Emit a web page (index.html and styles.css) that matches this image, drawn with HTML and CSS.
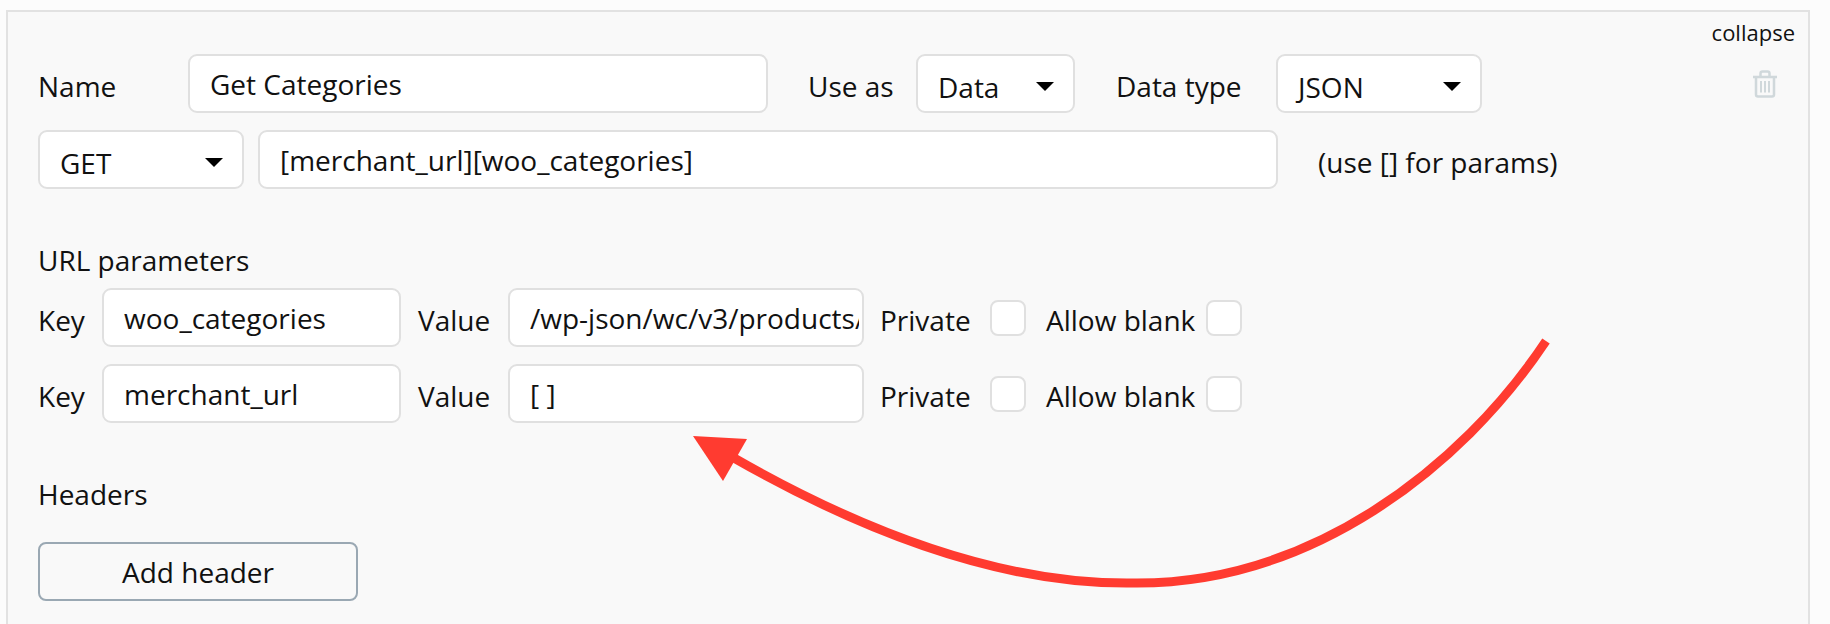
FILE: index.html
```html
<!DOCTYPE html>
<html lang="en">
<head>
    <meta charset="UTF-8">
    <title>API call</title>
    <link rel="stylesheet" href="styles.css">
</head>
<body>
    <div class="panel">
        <div class="collapse">collapse</div>

        <div class="row">
            <span class="lbl lbl-name">Name</span>
            <div class="field f-name">Get Categories</div>
            <span class="lbl lbl-use">Use as</span>
            <div class="field sel f-use">Data<i class="caret"></i></div>
            <span class="lbl lbl-type">Data type</span>
            <div class="field sel f-type">JSON<i class="caret"></i></div>
            <svg class="trash" width="26" height="28" viewBox="0 0 26 28" fill="none" stroke="#d0d8db" stroke-width="2.500">
                <path d="M1 7h24M8.500 7V3.500q0-2 2-2h5q2 0 2 2V7"/>
                <path d="M4 7v17.500q0 2 2 2h14q2 0 2-2V7"/>
                <path d="M9 11v11.500M13 11v11.500M17 11v11.500" stroke-width="2"/>
            </svg>
        </div>

        <div class="row">
            <div class="field sel f-method">GET<i class="caret"></i></div>
            <div class="field f-url">[merchant_url][woo_categories]</div>
            <span class="lbl lbl-hint">(use [] for params)</span>
        </div>

        <div class="section section-url">URL parameters</div>

        <div class="row">
            <span class="lbl lbl-key">Key</span>
            <div class="field f-key">woo_categories</div>
            <span class="lbl lbl-value">Value</span>
            <div class="field f-value"><span class="clip">/wp-json/wc/v3/products/categories</span></div>
            <span class="lbl lbl-private">Private</span>
            <div class="check"></div>
            <span class="lbl lbl-blank">Allow blank</span>
            <div class="check"></div>
        </div>

        <div class="row">
            <span class="lbl lbl-key">Key</span>
            <div class="field f-key">merchant_url</div>
            <span class="lbl lbl-value">Value</span>
            <div class="field f-value"><span class="clip">[ ]</span></div>
            <span class="lbl lbl-private">Private</span>
            <div class="check"></div>
            <span class="lbl lbl-blank">Allow blank</span>
            <div class="check"></div>
        </div>

        <div class="section section-headers">Headers</div>

        <button class="add-btn">Add header</button>
    </div>

    <!-- annotation on top of the screenshot -->
    <svg class="arrow" width="1830" height="624" viewBox="0 0 1830 624" fill="none">
        <path d="M1546 341C1460 470 1310 583 1137 583C1000 586 860 530 734 458" stroke="#ff3b30" stroke-width="9"/>
        <polygon points="693,436 747,439 723,481" fill="#ff3b30"/>
    </svg>
</body>
</html>
```

FILE: styles.css
```css
* {margin: 0; padding: 0; box-sizing: border-box;}
html, body {height: 624px; overflow: hidden;}
body {background-color: #fcfcfc; font-family: "Open Sans", "Noto Sans", sans-serif; font-size: 28px; color: #111;}

.panel {width: 1804px; height: 640px; margin: 10px 0 0 6px; padding: 0 30px; background-color: #f9f9f9; border: 2px solid #e2e2e2;}
.collapse {height: 42px; font-size: 22px; line-height: 28px; padding-top: 6px; margin-right: -17px; text-align: right;}

.row {display: flex; align-items: center; height: 59px; margin-bottom: 17px;}
.lbl {line-height: 36px; padding-top: 4px; white-space: nowrap;}
.lbl-name {width: 150px;}
.lbl-use {margin-left: 40px; width: 108px;}
.lbl-type {margin-left: 41px; width: 160px;}
.lbl-hint {margin-left: 40px;}
.lbl-key {width: 64px;}
.lbl-value {margin-left: 17px; width: 90px;}
.lbl-private {margin-left: 16px; width: 110px;}
.lbl-blank {margin-left: 20px; width: 160px;}

.field {height: 59px; line-height: 57px; padding: 0 20px; background-color: #fff; border: 2px solid #e0e0e0; border-radius: 9px; white-space: nowrap;}
.sel {position: relative; padding-top: 3px;}
.caret {position: absolute; top: 26px; right: 19px; border-style: solid; border-width: 9px 9px 0; border-color: #000 transparent transparent;}
.f-name {width: 580px;}
.f-use {width: 159px;}
.f-type {width: 206px;}
.f-method {width: 206px; margin-right: 14px;}
.f-url {width: 1020px;}
.f-key {width: 299px;}
.f-value {width: 356px; padding-right: 3px;}
.clip {display: block; overflow: hidden;}

.check {width: 36px; height: 36px; background-color: #fff; border: 2px solid #e0e0e0; border-radius: 8px;}
.trash {margin-left: auto;}

.section {line-height: 36px;}
.section-url {margin-top: 53px; margin-bottom: 10px;}
.section-headers {margin-top: 53px; margin-bottom: 30px;}

.add-btn {display: block; width: 320px; height: 59px; font: inherit; color: inherit; background-color: #f9f9f9; border: 2px solid #9aa8b3; border-radius: 8px;}

.arrow {position: absolute; left: 0; top: 0;}
```
